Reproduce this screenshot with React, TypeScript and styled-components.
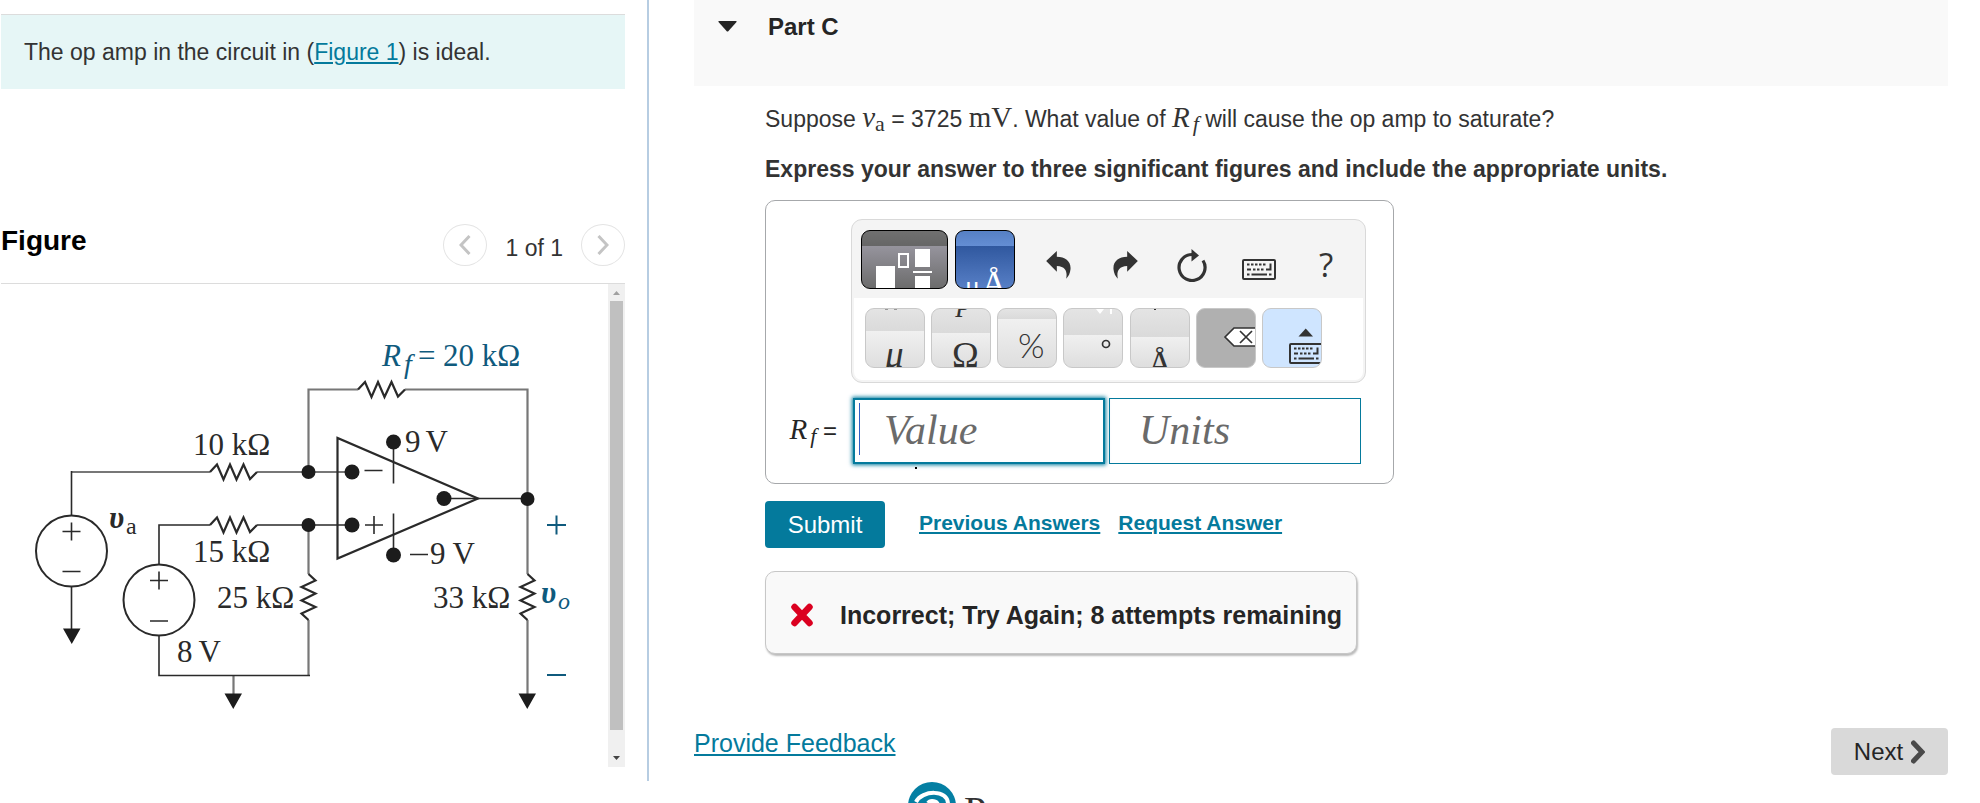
import React from 'react';
import styled, { createGlobalStyle } from 'styled-components';

const sans = '"Liberation Sans", Arial, sans-serif';
const serif = '"Liberation Serif", "Times New Roman", serif';
const teal = '#047a9c';

const GlobalStyle = createGlobalStyle`
  *, *::before, *::after { box-sizing: border-box; }
  body { margin: 0; background: #fff; color: #333; font: 24px/30px ${sans}; }
  button, input { font-family: inherit; margin: 0; }
  h1, h2, p { margin: 0; }
`;

const Shell = styled.div`
  display: grid;
  grid-template-columns: minmax(480px, 649px) minmax(0, 1fr);
  grid-template-rows: minmax(0, 1fr);
  height: 100vh;
  overflow: hidden;
`;

const Link = styled.a`
  color: ${teal};
  text-decoration: underline;
  text-decoration-thickness: 2px;
  text-underline-offset: 2px;
`;

/* ---------- left: problem text and figure ---------- */

const FigurePane = styled.aside`
  display: flex;
  flex-direction: column;
  margin-bottom: 22px;
  padding: 14px 22px 14px 1px;
  border-right: 2px solid #b7cde2;
`;

const Intro = styled.p`
  padding: 22px 23px;
  border-top: 1px solid #dcdcdc;
  background: #e6f6f6;
  font-size: 23px;
`;

const FigureHeader = styled.div`
  display: flex;
  align-items: center;
  margin-top: 136px;
  height: 59px;
  padding-bottom: 18px;
  border-bottom: 1px solid #dcdcdc;
`;

const FigureTitle = styled.h2`
  flex: 1;
  padding-bottom: 8px;
  color: #000;
  font-size: 28px;
  line-height: 32px;
`;

const PageLabel = styled.span`
  padding: 6px 18px 0;
  font-size: 23px;
`;

const RoundButton = styled.button`
  display: grid;
  place-items: center;
  width: 44px;
  height: 42px;
  padding: 0;
  border: 1px solid #e4e4e4;
  border-radius: 50%;
  background: #fff;
`;

const FigureScroller = styled.div`
  display: flex;
  flex: 1;
  min-height: 0;
`;

const Drawing = styled.svg`
  flex: 1;
  min-width: 0;
  height: 483px;
  font-family: ${serif};
  font-size: 31px;
`;

const ScrollTrack = styled.div`
  display: flex;
  flex-direction: column;
  align-items: center;
  width: 17px;
  background: #f0f0f0;
`;

const ScrollThumb = styled.div`
  flex: 1;
  width: 13px;
  background: #c0c0c0;
`;

const ScrollArrow = styled.svg<{ $end?: boolean }>`
  width: 17px;
  height: ${(p) => (p.$end ? 37 : 17)}px;
`;

/* ---------- right: question ---------- */

const Main = styled.main`
  display: flex;
  flex-direction: column;
  padding: 0 32px 0 45px;
`;

const PartHeader = styled.header`
  display: flex;
  align-items: flex-start;
  gap: 31px;
  height: 86px;
  flex: none;
  padding: 12px 24px;
  background: #f9f9f9;
`;

const Toggle = styled.button`
  width: 19px;
  height: 30px;
  padding: 0;
  border: 0;
  background: none;
`;

const PartTitle = styled.h1`
  color: #252525;
  font-size: 24px;
  line-height: 30px;
`;

const Question = styled.section`
  display: flex;
  flex-direction: column;
  align-items: flex-start;
  flex: none;
  padding: 17px 0 0 71px;
`;

const Prompt = styled.p`
  font-size: 23px;
  line-height: 30px;
  & + & { margin-top: 19px; }
`;

const MathText = styled.span<{ $italic?: boolean }>`
  font-family: ${serif};
  font-size: 29px;
  line-height: 1;
  font-style: ${(p) => (p.$italic ? 'italic' : 'normal')};
`;

const Sub = styled.sub<{ $italic?: boolean }>`
  margin-left: ${(p) => (p.$italic ? 3 : 0)}px;
  font-size: 22px;
  line-height: 1;
  vertical-align: -4px;
  font-style: ${(p) => (p.$italic ? 'italic' : 'normal')};
`;

const AnswerBox = styled.form`
  display: flex;
  flex-direction: column;
  align-items: flex-end;
  width: 629px;
  margin-top: 16px;
  padding: 18px 27px 19px 19px;
  border: 1px solid #a6a8ab;
  border-radius: 10px;
`;

const Toolbar = styled.div`
  width: 515px;
  padding: 0 2px 2px;
  border: 1px solid #d9d9d9;
  border-radius: 11px;
  background: #f4f4f4;
`;

const ToolRow = styled.div`
  display: flex;
  gap: 7px;
  padding: 10px 7px 9px;
`;

const KeyRow = styled.div`
  display: grid;
  grid-template-columns: repeat(7, 60px);
  justify-content: space-between;
  padding: 10px 41px 12px 11px;
  border-radius: 0 0 8px 8px;
  background: #fff;
`;

const PaletteButton = styled.button<{ $blue?: boolean }>`
  width: ${(p) => (p.$blue ? 60 : 88)}px;
  height: 59px;
  padding: 0;
  overflow: hidden;
  border: 1px solid #000;
  border-radius: 9px;
  background: ${(p) =>
    p.$blue
      ? 'linear-gradient(#5680c4, #648ed4 15px, #30589f 15px, #577fc6)'
      : 'linear-gradient(#707070, #666 15px, #96949d 15px, #6c6c6c)'};
  svg { display: block; }
`;

const ToolIcons = styled.div`
  display: flex;
  gap: 7px;
  padding: 11px 0 0 6px;
`;

const IconButton = styled.button`
  display: grid;
  place-items: center;
  width: 60px;
  height: 48px;
  padding: 0;
  border: 0;
  background: none;
  color: #333;
`;

const HelpMark = styled.span`
  font: 33px/48px "Open Sans", sans-serif;
  padding-bottom: 2px;
`;

const Key = styled.button<{ $band?: number; $fill?: string }>`
  height: 60px;
  padding: 0;
  overflow: hidden;
  border: 1px solid #c8c8c8;
  border-radius: 9px;
  background: ${(p) =>
    p.$fill ?? `linear-gradient(#e4e4e4, #dadada ${p.$band}px, #f0f0f0 ${p.$band}px, #dedede)`};
  svg { display: block; fill: #333; font-family: ${serif}; }
`;

const AnswerRow = styled.div`
  display: flex;
  align-items: center;
  gap: 4px;
  margin: 15px 5px 0 0;
`;

const AnswerLabel = styled.label`
  margin-right: 12px;
  color: #252525;
  font-size: 24px;
`;

const FieldWrap = styled.span`
  position: relative;
  display: block;
`;

const Field = styled.input<{ $active?: boolean }>`
  display: block;
  width: 252px;
  height: 66px;
  padding: 0 29px 2px;
  border: ${(p) => (p.$active ? 2 : 1)}px solid ${teal};
  border-radius: 0;
  outline: 0;
  box-shadow: ${(p) => (p.$active ? `0 0 4px 1px ${teal}` : 'none')};
  background: #fff;
  && { font-family: ${serif}; }
  font-size: 42px;
  font-style: italic;
  &::placeholder { color: #6a6a6a; opacity: 1; }
`;

const Caret = styled.i`
  position: absolute;
  left: 6px;
  top: 5px;
  width: 1px;
  height: 52px;
  background: #2f5fc4;
`;

const Speck = styled.i`
  position: absolute;
  left: 62px;
  top: 69px;
  width: 2px;
  height: 2px;
  background: #000;
`;

const Actions = styled.div`
  display: flex;
  align-items: center;
  margin-top: 17px;
`;

const Submit = styled.button`
  width: 120px;
  height: 47px;
  margin-right: 34px;
  padding: 0;
  border: 0;
  border-radius: 4px;
  background: ${teal};
  color: #fff;
  font-size: 24px;
`;

const ActionLink = styled(Link)`
  margin-right: 18px;
  padding-bottom: 3px;
  font-size: 21px;
  font-weight: bold;
`;

const Result = styled.div`
  display: flex;
  align-items: center;
  gap: 26px;
  margin-top: 23px;
  width: 592px;
  height: 83px;
  padding: 4px 0 0 24px;
  border: 1px solid #c7c7c7;
  border-radius: 10px;
  background: #f9f9f9;
  box-shadow: 1px 2px 2px #bbb;
  color: #252525;
  font-size: 25px;
  font-weight: bold;
  white-space: nowrap;
`;

const BottomBar = styled.div`
  display: flex;
  flex: none;
  justify-content: space-between;
  margin-top: 74px;
`;

const Feedback = styled(Link)`
  font-size: 25px;
`;

const Next = styled.button`
  display: flex;
  align-items: center;
  justify-content: center;
  gap: 8px;
  width: 117px;
  height: 47px;
  padding: 0;
  border: 0;
  border-radius: 4px;
  background: #d9d9d9;
  color: #252525;
  font-size: 24px;
`;

const Footer = styled.footer`
  display: flex;
  flex: none;
  gap: 8px;
  margin: 7px 0 0 214px;
  color: #333;
  font: 40px/52px ${serif};
`;

const Brand = styled.span`
  padding-top: 3px;
`;

/* ---------- drawings ---------- */

const hz = (x: number, y: number) =>
  `M${x} ${y}l7 -7.5 6.5 15 6.5 -15 6.5 15 7 -15 6.5 14.5 7 -7`;
const vz = (x: number, y: number) =>
  `M${x} ${y}l7 6.5 -14 6.5 14 6.5 -14 7 14 6.5 -14 6.5 7 6.5`;

const Circuit = () => (
  <Drawing viewBox="0 284 606 483" preserveAspectRatio="xMinYMin meet" role="img" aria-label="Op amp circuit">
    <g fill="none" stroke="#777" strokeWidth="2.2">
      <path d="M70 472H209M256 472H351M307.500 472V389.500H357M404 389.500H526.500V574M307.500 525V574M307.500 620V675M526.500 620V694M232.500 675V694" />
    </g>
    <g fill="none" stroke="#2a2a2a" strokeWidth="1.6">
      <path d="M70.500 471V515M70.500 586V629M158 564V525H209M256 525H351M158 635V675.500H309M443 498.500H526M392.500 442V483.500M392.500 513.500V555" />
      <path d="M61.500 531.500h18M70.500 522.500v18M61.500 571.500h18M149 580.500h18M158 571.500v18M149 621h18M363.500 470.500h18M364 525h18M373 516v18M409 554.500h18" />
      <path strokeWidth="2.200" d={hz(209, 472) + hz(209, 525) + hz(357, 389.5) + vz(307.5, 574) + vz(526.5, 574)} />
      <path strokeWidth="2.200" d="M336.500 438V558.500L477 498.500Z" />
      <circle cx="70.500" cy="551" r="35.500" strokeWidth="2" />
      <circle cx="158" cy="600" r="35.500" strokeWidth="2" />
    </g>
    <g fill="#1c1c1c">
      <circle cx="307.500" cy="472" r="7" />
      <circle cx="307.500" cy="525" r="7" />
      <circle cx="351" cy="472" r="7.500" />
      <circle cx="351" cy="525" r="7.500" />
      <circle cx="392.500" cy="442" r="7.500" />
      <circle cx="392.500" cy="555" r="7.500" />
      <circle cx="443" cy="498.500" r="7.500" />
      <circle cx="526.500" cy="499" r="7" />
      <path d="M62 628.500h17.500l-8.750 15.500zM223.500 693.500h17.500l-8.750 15.500zM517.500 693.500h17.500l-8.750 15.500z" />
    </g>
    <g fill="#2a2a2a">
      <text x="192" y="455">10 kΩ</text>
      <text x="192" y="562">15 kΩ</text>
      <text x="216" y="608">25 kΩ</text>
      <text x="432" y="608">33 kΩ</text>
      <text x="176" y="662">8<tspan dx="6">V</tspan></text>
      <text x="404" y="452">9<tspan dx="5">V</tspan></text>
      <text x="429" y="564">9<tspan dx="7">V</tspan></text>
      <text x="108" y="528" fontStyle="italic" fontWeight="bold">υ</text>
      <text x="125" y="534" fontSize="24">a</text>
    </g>
    <g fill="#0f5a7d">
      <text x="381" y="366" fontStyle="italic">R</text>
      <text x="403" y="373" fontStyle="italic" fontSize="28">f</text>
      <text x="417" y="366">=</text>
      <text x="442" y="366">20 kΩ</text>
      <text x="540" y="603" fontStyle="italic" fontWeight="bold">υ</text>
      <text x="557" y="609" fontStyle="italic" fontSize="24">o</text>
      <path d="M546 525h19M555.500 515.500v19M546 675h19" fill="none" stroke="#0f5a7d" strokeWidth="2" />
    </g>
  </Drawing>
);

const Chevron = ({ flip }: { flip?: boolean }) => (
  <svg width="12" height="20" viewBox="0 0 12 20" fill="none" stroke="#c4c4c4" strokeWidth="3">
    <path d={flip ? 'M1.500 1L10 10 1.500 19' : 'M10.500 1L2 10l8.500 9'} />
  </svg>
);

const Keyboard = () => (
  <g>
    <rect x="1" y="1" width="32" height="19" rx="1" fill="none" stroke="#333" strokeWidth="2" />
    <path
      d="M5 5.500h2.500M9 5.500h2.500M13 5.500h2.500M17 5.500h2.500M21 5.500h2.500M5 10.500h4M11 10.500h2.500M15 10.500h2.500M19 10.500h2.500M24 10.500h5.500M28.500 4.500v7M5 15.500h2.500M9.500 15.500h15.500M27 15.500h2.500"
      fill="none"
      stroke="#333"
      strokeWidth="2"
    />
  </g>
);

const arrow =
  'M0 30L32 0V17C58 17 75 31 73 55C72 67 67 77 60 83C63 68 63 46 32 45V62Z';

export default function App() {
  return (
    <>
      <GlobalStyle />
      <Shell>
        <FigurePane>
          <Intro>
            The op amp in the circuit in (<Link href="#figure">Figure 1</Link>) is ideal.
          </Intro>
          <FigureHeader id="figure">
            <FigureTitle>Figure</FigureTitle>
            <RoundButton type="button" aria-label="Previous figure"><Chevron /></RoundButton>
            <PageLabel>1 of 1</PageLabel>
            <RoundButton type="button" aria-label="Next figure"><Chevron flip /></RoundButton>
          </FigureHeader>
          <FigureScroller>
            <Circuit />
            <ScrollTrack>
              <ScrollArrow viewBox="0 0 17 17"><path d="M5 11h7l-3.500-4z" fill="#a0a0a0" /></ScrollArrow>
              <ScrollThumb />
              <ScrollArrow $end viewBox="0 0 17 37"><path d="M5 26h7l-3.500 4z" fill="#444" /></ScrollArrow>
            </ScrollTrack>
          </FigureScroller>
        </FigurePane>

        <Main>
          <PartHeader>
            <Toggle type="button" aria-label="Collapse part C">
              <svg width="19" height="11" viewBox="0 0 19 11"><path d="M1 0h17q1 0 .5 1L10.500 10q-1 1-2 0L.5 1Q0 0 1 0z" fill="#252525" /></svg>
            </Toggle>
            <PartTitle>Part C</PartTitle>
          </PartHeader>

          <Question>
            <Prompt>
              Suppose <MathText $italic>v</MathText><MathText><Sub>a</Sub></MathText> = 3725 <MathText>mV</MathText>. What value of{' '}
              <MathText $italic>R<Sub $italic>f</Sub></MathText> will cause the op amp to saturate?
            </Prompt>
            <Prompt><b>Express your answer to three significant figures and include the appropriate units.</b></Prompt>

            <AnswerBox onSubmit={(e) => e.preventDefault()} id="answer">
              <Toolbar>
                <ToolRow>
                  <PaletteButton type="button" aria-label="Templates">
                    <svg width="86" height="57" viewBox="862 230 86 57" fill="#fff">
                      <path d="M876 265h19v24h-19zM915 248h15v18h-15zM913 270h19v2h-19zM915 275h15v14h-15z" />
                      <path d="M899 253h9v13h-9z" fill="none" stroke="#fff" strokeWidth="2" />
                    </svg>
                  </PaletteButton>
                  <PaletteButton type="button" $blue aria-label="Symbols">
                    <svg width="58" height="57" viewBox="957 230 58 57" fill="#fff" fontFamily="Liberation Serif" fontSize="30">
                      <text x="966" y="294" fontSize="28">μ</text>
                      <text x="982" y="295" fontSize="36">Å</text>
                    </svg>
                  </PaletteButton>
                  <ToolIcons>
                    <IconButton type="button" aria-label="Undo">
                      <svg width="25" height="28" viewBox="0 0 74 84" fill="#333"><path d={arrow} /></svg>
                    </IconButton>
                    <IconButton type="button" aria-label="Redo">
                      <svg width="25" height="28" viewBox="0 0 74 84" fill="#333"><path d={arrow} transform="matrix(-1 0 0 1 74 0)" /></svg>
                    </IconButton>
                    <IconButton type="button" aria-label="Reset">
                      <svg width="30" height="33" viewBox="0 0 30 33">
                        <path d="M15 5.500A13 13 0 1 0 26 11.500" fill="none" stroke="#333" strokeWidth="3.200" />
                        <path d="M14.500 0L22 6.500l-7.500 6z" fill="#333" />
                      </svg>
                    </IconButton>
                    <IconButton type="button" aria-label="Keyboard shortcuts">
                      <svg width="34" height="29" viewBox="0 -8 34 29"><Keyboard /></svg>
                    </IconButton>
                    <IconButton type="button" aria-label="Help"><HelpMark>?</HelpMark></IconButton>
                  </ToolIcons>
                </ToolRow>
                <KeyRow>
                  <Key type="button" $band={22} aria-label="Micro">
                    <svg width="58" height="58" viewBox="866 308 58 58">
                      <text x="885" y="366" fontSize="37" fontStyle="italic">μ</text>
                      <path d="M885 308h3v1h-3zM894 308h3v1h-3z" fill="#999" />
                    </svg>
                  </Key>
                  <Key type="button" $band={24} aria-label="Ohm">
                    <svg width="58" height="58" viewBox="932 308 58 58">
                      <text x="957" y="309" fontSize="32" fontStyle="italic">p</text>
                      <text x="952" y="366" fontSize="36">Ω</text>
                    </svg>
                  </Key>
                  <Key type="button" $band={10} aria-label="Percent">
                    <svg width="58" height="58" viewBox="999 308 58 58">
                      <text x="1019" y="357" fontSize="34" fontWeight="300" fontFamily="Lato">%</text>
                    </svg>
                  </Key>
                  <Key type="button" $band={26} aria-label="Degree">
                    <svg width="58" height="58" viewBox="1065 308 58 58">
                      <circle cx="1107" cy="343" r="3.500" fill="none" stroke="#333" strokeWidth="1.700" />
                      <path d="M1097 308h8l-4 5zM1111 308h2v5h-2z" fill="#fff" />
                    </svg>
                  </Key>
                  <Key type="button" $band={28} aria-label="Angstrom">
                    <svg width="58" height="58" viewBox="1132 308 58 58">
                      <text x="1148" y="375" fontSize="36">Å</text>
                      <path d="M1155 308h2v1h-2z" />
                    </svg>
                  </Key>
                  <Key type="button" $fill="#b0b0b0" aria-label="Backspace">
                    <svg width="58" height="58" viewBox="1198 308 58 58">
                      <path d="M1226 336l9-9h25v18h-25z" fill="#fff" stroke="#333" strokeWidth="1.700" />
                      <path d="M1241 330l12 12M1253 330l-12 12" stroke="#333" strokeWidth="1.700" />
                    </svg>
                  </Key>
                  <Key type="button" $fill="#cfe5ff" aria-label="Show keyboard">
                    <svg width="58" height="58" viewBox="1265 308 58 58">
                      <path d="M1300.500 335.500h14.500l-7.250-8z" />
                      <g transform="translate(1291 342)"><Keyboard /></g>
                    </svg>
                  </Key>
                </KeyRow>
              </Toolbar>
              <AnswerRow>
                <AnswerLabel htmlFor="value">
                  <MathText $italic>R<Sub $italic>f</Sub></MathText> =
                </AnswerLabel>
                <FieldWrap>
                  <Field id="value" placeholder="Value" $active />
                  <Caret />
                  <Speck />
                </FieldWrap>
                <Field aria-label="Units" placeholder="Units" />
              </AnswerRow>
            </AnswerBox>

            <Actions>
              <Submit type="submit" form="answer">Submit</Submit>
              <ActionLink href="#previous">Previous Answers</ActionLink>
              <ActionLink href="#request">Request Answer</ActionLink>
            </Actions>

            <Result role="status">
              <svg width="24" height="24" viewBox="0 0 24 24"><path d="M4.500 4L19.500 20M19.500 4L4.500 20" stroke="#db0020" strokeWidth="6.500" strokeLinecap="round" /></svg>
              Incorrect; Try Again; 8 attempts remaining
            </Result>
          </Question>

          <BottomBar>
            <Feedback href="#feedback">Provide Feedback</Feedback>
            <Next type="button">
              Next
              <svg width="14" height="24" viewBox="0 0 14 24" fill="none" stroke="#4a4a4a" strokeWidth="5" strokeLinecap="round"><path d="M2.500 3L11 12l-8.500 9" /></svg>
            </Next>
          </BottomBar>

          <Footer>
            <svg width="48" height="48" viewBox="0 0 48 48">
              <circle cx="24" cy="24" r="24" fill="#047fa3" />
              <path d="M8 20C14 8 40 7 40 22c0 9-7 12-14 12" fill="none" stroke="#fff" strokeWidth="4" />
              <path d="M20 21c2-3 10-3 10 3 0 4-4 5-8 5" fill="none" stroke="#fff" strokeWidth="4" />
            </svg>
            <Brand>Pearson</Brand>
          </Footer>
        </Main>
      </Shell>
    </>
  );
}
